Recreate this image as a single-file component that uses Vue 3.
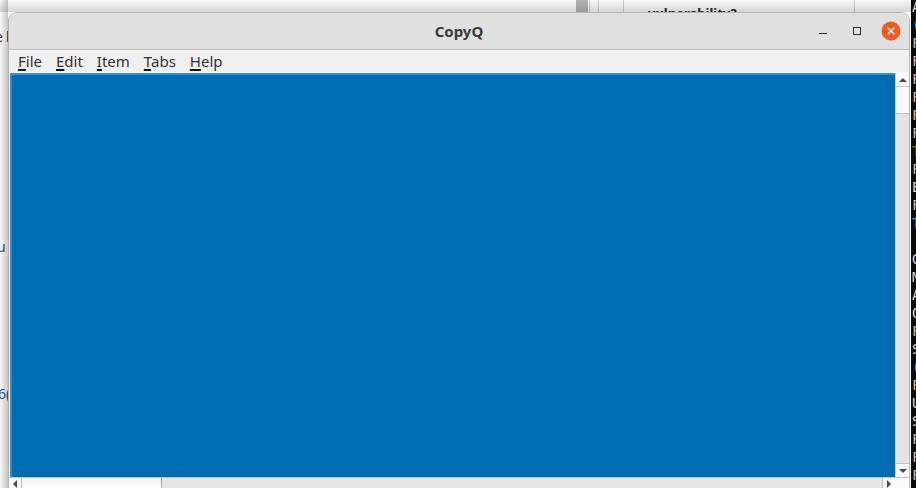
<script setup>
const amber = '#d9b58c'
const pale = '#d8d8d8'
const blue = '#4f8fd0'
const termRows = [
  { t: 'A', c: pale }, { t: '(', c: blue },
  { t: 'F', c: amber }, { t: 'F', c: amber }, { t: 'F', c: amber }, { t: 'F', c: amber }, { t: 'F', c: amber }, { t: 'F', c: amber },
  { t: 'T', c: '#2f9a2f' }, { t: 'F', c: amber }, { t: 'E', c: pale }, { t: 'F', c: amber }, { t: 'T', c: '#5a9ad8' },
  { t: '', c: pale }, { t: 'G', c: pale }, { t: 'M', c: pale }, { t: 'A', c: pale }, { t: 'O', c: pale },
  { t: 'F', c: amber }, { t: 'S', c: pale }, { t: '(', c: blue }, { t: 'F', c: amber }, { t: 'U', c: pale },
  { t: 'S', c: pale }, { t: 'F', c: amber }, { t: 'F', c: amber }, { t: 'F', c: amber }
]
const menus = [
  { key: 'F', rest: 'ile' }, { key: 'E', rest: 'dit' }, { key: 'I', rest: 'tem' },
  { key: 'T', rest: 'abs' }, { key: 'H', rest: 'elp' }
]
</script>

<template>
  <div class="desktop">
    <div class="page-bg">
      <span class="line scroll-thumb"></span>
      <span class="line l1"></span>
      <span class="line l2"></span>
      <span class="line l3"></span>
      <span class="line l4"></span>
      <span class="vuln">vulnerability?</span>
      <span class="frag f1">e</span>
      <span class="frag f2">u</span>
      <span class="frag f3">6(</span>
      <span class="brown"></span>
    </div>
    <div class="shadow-left"></div>
    <div class="terminal">
      <div class="term-inner">
        <div v-for="(r, i) in termRows" :key="i" class="term-row" :style="{ color: r.c }">{{ r.t }}</div>
      </div>
    </div>

    <section class="window">
      <header class="titlebar">
        <span class="title">CopyQ</span>
        <div class="controls">
          <svg class="ctl" width="12" height="12" viewBox="0 0 12 12"><path d="M2 8.5h8" stroke="#2e2e2e" stroke-width="1"/></svg>
          <svg class="ctl" width="12" height="12" viewBox="0 0 12 12"><rect x="2.5" y="2.5" width="7" height="7" fill="none" stroke="#2e2e2e" stroke-width="1"/></svg>
          <svg class="close" width="20" height="20" viewBox="0 0 20 20"><circle cx="10" cy="10" r="9.5" fill="#ef5a25"/><path d="M6.5 6.5l7 7M13.5 6.5l-7 7" stroke="#fff" stroke-width="1.4"/></svg>
        </div>
      </header>
      <nav class="menubar">
        <span v-for="m in menus" :key="m.key" class="menu"><u>{{ m.key }}</u>{{ m.rest }}</span>
      </nav>
      <div class="body">
        <div class="main">
          <div class="list"></div>
          <div class="vbar">
            <div class="btn up"><i class="tri t-up"></i></div>
            <div class="vthumb"></div>
            <div class="trough"></div>
            <div class="btn down"><i class="tri t-down"></i></div>
          </div>
        </div>
        <div class="hbar">
          <div class="hbtn left"><i class="tri t-left"></i></div>
          <div class="hthumb"></div>
          <div class="trough"></div>
          <div class="hbtn right"><i class="tri t-right"></i></div>
          <div class="corner"></div>
        </div>
      </div>
    </section>
  </div>
</template>

<style>
html, body { margin: 0; padding: 0; overflow: hidden; background: #000; }
</style>

<style scoped>
.desktop {
  position: relative;
  width: 916px;
  height: 488px;
  overflow: hidden;
  background: #fff;
  font-family: "Noto Sans", "Open Sans", sans-serif;
}
.page-bg { position: absolute; inset: 0; background: #f8f8f8; overflow: hidden; }
.line { position: absolute; top: 0; height: 14px; background: #cfcfcf; width: 1px; }
.scroll-thumb { left: 576px; width: 12px; background: #b2b2b2; }
.l1 { left: 589px; }
.l2 { left: 598px; }
.l3 { left: 623px; }
.l4 { left: 854px; }
.vuln { position: absolute; left: 648px; top: 4px; font-size: 13px; font-weight: 700; color: #222; line-height: 18px; }
.frag { position: absolute; left: -1px; font-size: 14px; line-height: 16px; }
.f1 { top: 29px; left: -5px; color: #333; }
.f2 { top: 239px; left: -3px; color: #30507a; }
.f3 { top: 386px; left: -2px; color: #30507a; }
.brown { position: absolute; left: 7px; top: 31px; width: 1px; height: 11px; background: #7a5a30; }
.terminal {
  position: absolute;
  left: 911px;
  top: 0;
  width: 5px;
  height: 488px;
  background: #0a0a0a;
  overflow: hidden;
  font-family: "DejaVu Sans Mono", monospace;
  font-size: 14px;
  line-height: 18px;
}
.term-inner { margin-top: -2px; padding-left: 1px; }
.term-row { height: 18px; }
.shadow-left {
  position: absolute;
  left: 0;
  top: 0;
  width: 911px;
  height: 488px;
  pointer-events: none;
  background:
    linear-gradient(to right, rgba(0,0,0,0) 0, rgba(0,0,0,.2) 8px) left / 8px 100% no-repeat,
    linear-gradient(to bottom, rgba(0,0,0,0) 0, rgba(0,0,0,.14) 12px) 0 0 / 100% 12px no-repeat;
}
.window {
  position: absolute;
  left: 8px;
  top: 12px;
  width: 902px;
  height: 476px;
  display: flex;
  flex-direction: column;
  background: #f0f0f0;
  border-radius: 9px 9px 0 0;
  border: 1px solid #b4b4b4;
  border-bottom: 0;
  box-sizing: border-box;
  overflow: hidden;
}
.titlebar {
  position: relative;
  height: 36px;
  flex: none;
  display: flex;
  align-items: center;
  justify-content: center;
  background: #e0e0e0;
  border-bottom: 1px solid #bdbdbd;
  box-sizing: content-box;
}
.title { font-size: 15px; font-weight: 700; color: #3a3a3a; }
.controls {
  position: absolute;
  right: 8px;
  top: 8px;
  display: flex;
  align-items: center;
  gap: 22px;
}
.ctl { display: block; }
.close { display: block; margin-left: -4px; }
.menubar {
  height: 22px;
  flex: none;
  display: flex;
  align-items: center;
  gap: 14px;
  padding-left: 9px;
  background: #f0f0f0;
  font-size: 15px;
  color: #303030;
}
.menu u { text-decoration-thickness: 2px; text-underline-offset: 2px; text-decoration-color: #111; }
.body {
  flex: 1;
  min-height: 0;
  display: flex;
  flex-direction: column;
  background: #f6f6f6;
  padding-top: 1px;
}
.main { flex: 1; min-height: 0; display: flex; padding-left: 1px; }
.list {
  flex: 1;
  background: #006db2;
  box-shadow: inset 2px 2px 0 #3a8dc6;
}
.vbar { width: 14px; flex: none; display: flex; flex-direction: column; border-left: 1px solid #cfcfcf; box-sizing: border-box; }
.btn { height: 13px; flex: none; background: #fbfbfb; display: flex; align-items: center; justify-content: center; }
.down { border-top: 1px solid #c4c4c4; }
.up { border-bottom: 1px solid #c4c4c4; }
.vthumb { height: 26px; flex: none; background: linear-gradient(to right, #f4f4f4, #ffffff); border-bottom: 1px solid #bcbcbc; }
.trough { flex: 1; background: #e4e4e4; }
.hbar { height: 10px; flex: none; display: flex; border-top: 1px solid #c0c0c0; background: #f8f8f8; }
.hbtn { width: 13px; flex: none; background: #fbfbfb; display: flex; align-items: flex-start; justify-content: center; padding-top: 2px; box-sizing: border-box; }
.left { border-right: 1px solid #c4c4c4; }
.right { border-left: 1px solid #c4c4c4; }
.hthumb { width: 140px; flex: none; background: linear-gradient(#f2f2f2, #fff); border-right: 1px solid #a8a8a8; box-sizing: border-box; }
.corner { width: 14px; flex: none; background: #fbfbfb; }
.tri { display: block; width: 0; height: 0; border-style: solid; border-color: transparent; }
.t-up { border-width: 0 4px 4px; border-bottom-color: #4a4a4a; }
.t-down { border-width: 4px 4px 0; border-top-color: #4a4a4a; }
.t-left { border-width: 4px 4px 4px 0; border-right-color: #4a4a4a; }
.t-right { border-width: 4px 0 4px 4px; border-left-color: #4a4a4a; }
</style>
